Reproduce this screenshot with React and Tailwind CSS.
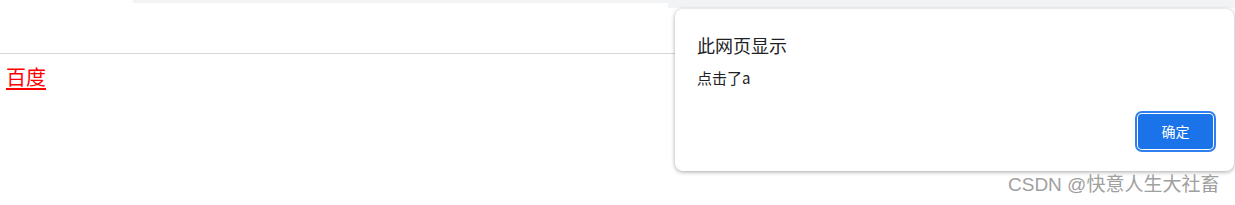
export default function App() {
  const cjk = { fontFamily: '"Noto Sans CJK SC", "Noto Sans", sans-serif' };

  return (
    <div className="relative w-[1235px] h-[205px] overflow-hidden bg-white" style={cjk}>
      {/* browser chrome remnants at the top */}
      <div className="flex h-[9px]">
        <div className="w-[133px]" />
        <div className="w-[535px] h-[3px] bg-[#f1f3f4]" />
        <div className="flex-1 h-[8px] bg-[#f1f3f4]" />
      </div>

      {/* page */}
      <div className="mt-[44px] border-t border-[#d6d6d6] w-[676px]" />
      <div className="pl-[6px] pt-[11px]">
        <a href="#" className="text-[20px] leading-[24px] text-[#ff0000] underline decoration-2 underline-offset-[3px]">
          百度
        </a>
      </div>

      {/* alert dialog */}
      <div className="absolute left-[675px] top-[9px] w-[559px] h-[162px] rounded-[8px] bg-white shadow-[0_1px_4px_rgba(0,0,0,0.35)] flex flex-col">
        <div className="pl-[22px] pt-[24px] text-[18px] leading-[24px] text-[#202124]">此网页显示</div>
        <div className="pl-[22px] pt-[11px] text-[15px] leading-[20px] text-[#202124]">点击了a</div>
        <div className="flex-1 flex items-end justify-end pr-[21px] pb-[22px]">
          <button className="w-[75px] h-[35px] rounded-[4px] bg-[#1a73e8] text-white text-[14px] ring-2 ring-offset-1 ring-[#2f7ff0]">
            确定
          </button>
        </div>
      </div>

      {/* watermark */}
      <div className="absolute left-[1008px] top-[173px] text-[19px] leading-[24px] text-[#a0a0a0] [text-shadow:0_0_1px_#ffffff]" style={{ fontFamily: '"Liberation Sans", "Noto Sans CJK SC", sans-serif' }}>
        CSDN @快意人生大社畜
      </div>
    </div>
  );
}
